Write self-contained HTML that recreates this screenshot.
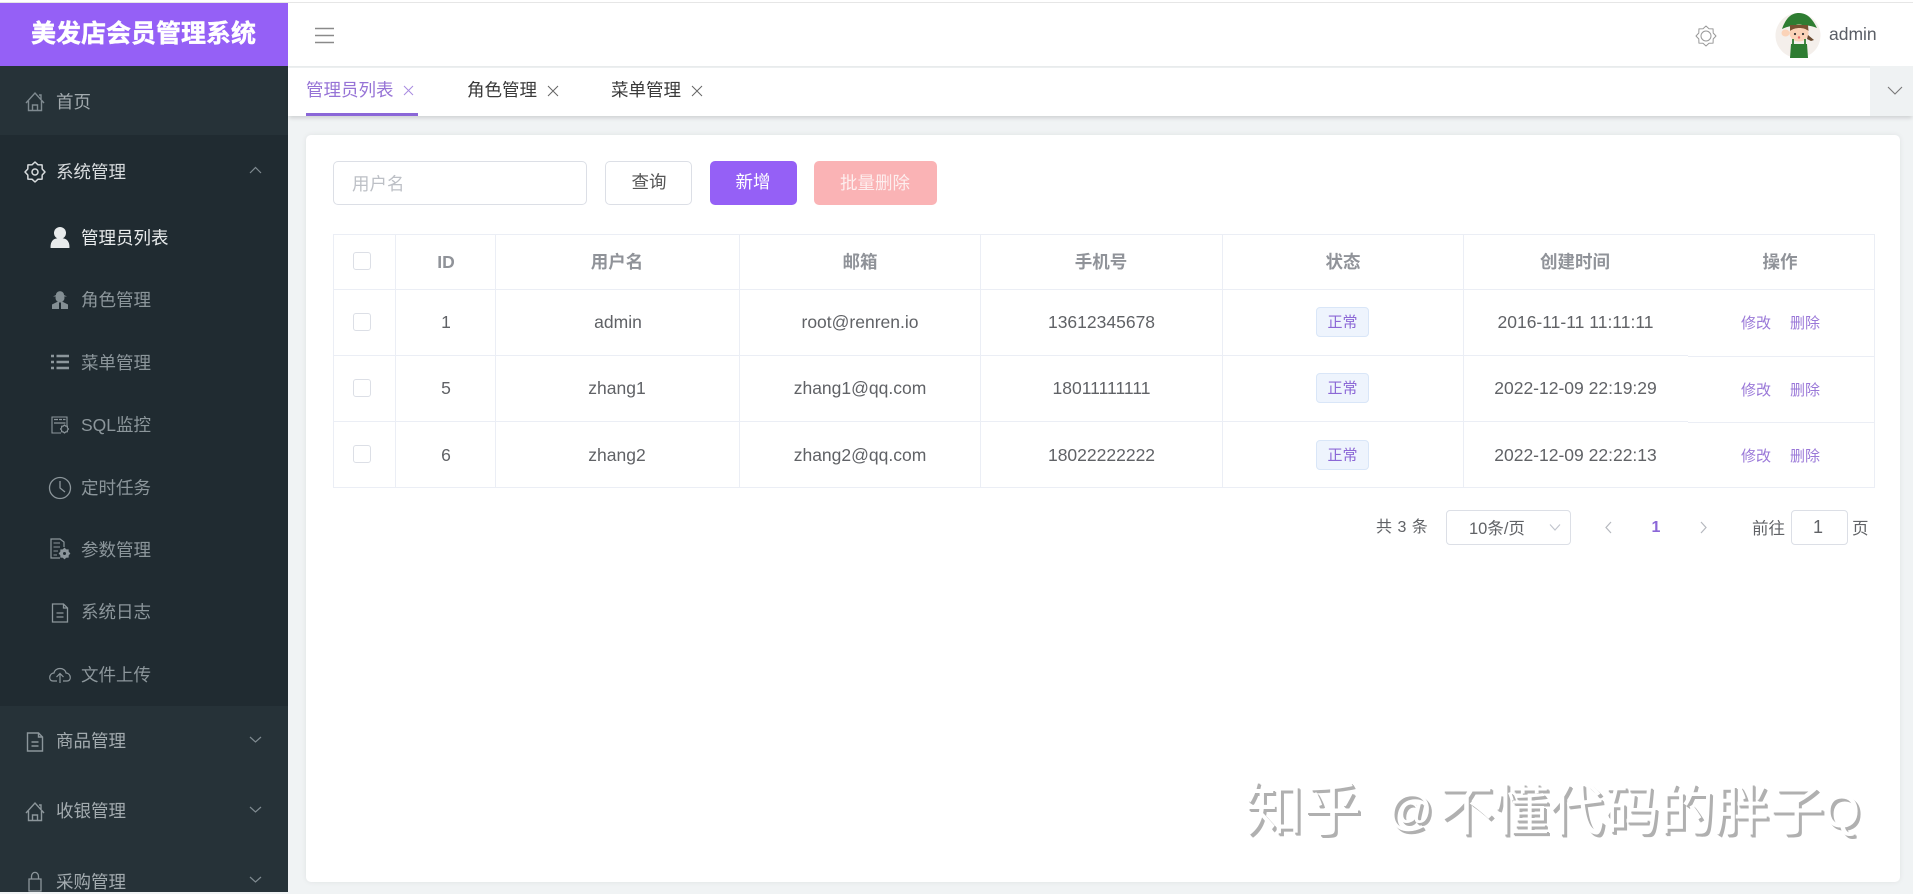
<!DOCTYPE html>
<html lang="zh-CN">
<head>
<meta charset="utf-8">
<title>美发店会员管理系统</title>
<style>
html,body{margin:0;padding:0;width:1913px;height:892px;overflow:hidden;background:#f0f3f4;font-family:"Liberation Sans","Noto Sans CJK SC",sans-serif;font-size:17.5px;color:#606266}
.b{position:absolute;box-sizing:border-box}
.t{position:absolute;white-space:nowrap;line-height:24px;height:24px}
.c{transform:translateX(-50%)}
.top{color:#a3abaf}
.sub{color:#8c969b}
.h{font-weight:bold;color:#909399}
.tag{position:absolute;box-sizing:border-box;left:1316px;width:53px;height:30px;line-height:29px;text-align:center;background:#eef4fd;border:1px solid #d9e6f8;border-radius:4px;color:#8c68d6;font-size:15px}
.l{color:#9a78d8;font-size:15px}
.ln{position:absolute;background:#ebeef5}
.cb{position:absolute;box-sizing:border-box;left:353px;width:18px;height:18px;border:1px solid #dcdfe6;border-radius:3px;background:#fff}
.w{height:60px;line-height:60px;color:#fff;text-shadow:2px 2px 0 #b0b0b0,3px 3px 0 #b0b0b0}
svg{position:absolute;left:0;top:0}
</style>
</head>
<body>
<!-- top strip and header -->
<div class="b" style="left:0;top:0;width:1913px;height:3px;background:#fff;border-bottom:1px solid #e6e6e6"></div>
<div class="b" style="left:288px;top:3px;width:1625px;height:63px;background:#fff;box-shadow:0 1px 2px rgba(0,0,0,.05)"></div>
<div class="b" style="left:0;top:3px;width:288px;height:63px;background:#9560f6"></div>
<div class="t" style="left:31px;top:22px;color:#fff;font-weight:bold;font-size:25px;-webkit-text-stroke:.4px #fff">美发店会员管理系统</div>

<!-- sidebar -->
<div class="b" style="left:0;top:66px;width:288px;height:826px;background:#263238"></div>
<div class="b" style="left:0;top:135px;width:288px;height:571px;background:#202b31"></div>
<div class="t top" style="left:56px;top:90px">首页</div>
<div class="t" style="left:56px;top:160px;color:#d8dcde">系统管理</div>
<div class="t" style="left:81px;top:226px;color:#e8ebec">管理员列表</div>
<div class="t sub" style="left:81px;top:288px">角色管理</div>
<div class="t sub" style="left:81px;top:351px">菜单管理</div>
<div class="t sub" style="left:81px;top:413px">SQL监控</div>
<div class="t sub" style="left:81px;top:476px">定时任务</div>
<div class="t sub" style="left:81px;top:538px">参数管理</div>
<div class="t sub" style="left:81px;top:600px">系统日志</div>
<div class="t sub" style="left:81px;top:663px">文件上传</div>
<div class="t top" style="left:56px;top:729px">商品管理</div>
<div class="t top" style="left:56px;top:799px">收银管理</div>
<div class="t top" style="left:56px;top:870px">采购管理</div>

<!-- tabs -->
<div class="b" style="left:288px;top:68px;width:1625px;height:48px;background:#fff;box-shadow:0 3px 4px -1px rgba(0,0,0,.14)"></div>
<div class="b" style="left:1870px;top:66px;width:43px;height:50px;background:#eff2f3"></div>
<div class="t" style="left:306px;top:78px;color:#9673d6">管理员列表</div>
<div class="t" style="left:467px;top:78px;color:#3a3a3a">角色管理</div>
<div class="t" style="left:611px;top:78px;color:#3a3a3a">菜单管理</div>
<div class="b" style="left:306px;top:113px;width:112px;height:3px;background:#8b67d8"></div>

<!-- card -->
<div class="b" style="left:306px;top:135px;width:1594px;height:747px;background:#fff;border-radius:5px;box-shadow:0 0 6px rgba(0,0,0,.07)"></div>

<!-- toolbar -->
<div class="b" style="left:333px;top:161px;width:254px;height:44px;border:1px solid #dcdfe6;border-radius:5px;background:#fff"></div>
<div class="t" style="left:352px;top:172px;color:#bdc0c6">用户名</div>
<div class="b" style="left:605px;top:161px;width:87px;height:44px;border:1px solid #dcdfe6;border-radius:5px;background:#fff"></div>
<div class="t c" style="left:649px;top:170px;color:#555">查询</div>
<div class="b" style="left:710px;top:161px;width:87px;height:44px;border-radius:5px;background:#9560f6"></div>
<div class="t c" style="left:753px;top:170px;color:#fff">新增</div>
<div class="b" style="left:814px;top:161px;width:123px;height:44px;border-radius:5px;background:#fab3b5"></div>
<div class="t c" style="left:875px;top:171px;color:#fdeeee">批量删除</div>

<!-- table lines -->
<div class="ln" style="left:333px;top:234px;width:1542px;height:1px"></div>
<div class="ln" style="left:333px;top:289px;width:1542px;height:1px"></div>
<div class="ln" style="left:333px;top:355px;width:1355px;height:1px"></div>
<div class="ln" style="left:1688px;top:356px;width:187px;height:1px"></div>
<div class="ln" style="left:333px;top:421px;width:1355px;height:1px"></div>
<div class="ln" style="left:1688px;top:422px;width:187px;height:1px"></div>
<div class="ln" style="left:333px;top:487px;width:1542px;height:1px"></div>
<div class="ln" style="left:333px;top:234px;width:1px;height:254px"></div>
<div class="ln" style="left:395px;top:234px;width:1px;height:254px"></div>
<div class="ln" style="left:495px;top:234px;width:1px;height:254px"></div>
<div class="ln" style="left:739px;top:234px;width:1px;height:254px"></div>
<div class="ln" style="left:980px;top:234px;width:1px;height:254px"></div>
<div class="ln" style="left:1222px;top:234px;width:1px;height:254px"></div>
<div class="ln" style="left:1463px;top:234px;width:1px;height:254px"></div>
<div class="ln" style="left:1874px;top:234px;width:1px;height:254px"></div>

<!-- table header -->
<div class="cb" style="top:252px"></div>
<div class="t c h" style="left:446px;top:250px">ID</div>
<div class="t c h" style="left:617px;top:250px">用户名</div>
<div class="t c h" style="left:860px;top:250px">邮箱</div>
<div class="t c h" style="left:1101px;top:250px">手机号</div>
<div class="t c h" style="left:1343px;top:250px">状态</div>
<div class="t c h" style="left:1575px;top:250px">创建时间</div>
<div class="t c h" style="left:1780px;top:250px">操作</div>

<!-- row 1 -->
<div class="cb" style="top:313px"></div>
<div class="t c" style="left:446px;top:310px">1</div>
<div class="t c" style="left:618px;top:310px">admin</div>
<div class="t c" style="left:860px;top:310px">root@renren.io</div>
<div class="t c" style="left:1101.500px;top:310px">13612345678</div>
<div class="tag" style="top:307px">正常</div>
<div class="t c" style="left:1575.500px;top:310px">2016-11-11 11:11:11</div>
<div class="t l" style="left:1741px;top:312px">修改</div>
<div class="t l" style="left:1790px;top:312px">删除</div>

<!-- row 2 -->
<div class="cb" style="top:379px"></div>
<div class="t c" style="left:446px;top:376px">5</div>
<div class="t c" style="left:617px;top:376px">zhang1</div>
<div class="t c" style="left:860px;top:376px">zhang1@qq.com</div>
<div class="t c" style="left:1101.500px;top:375.500px">18011111111</div>
<div class="tag" style="top:373px">正常</div>
<div class="t c" style="left:1575.500px;top:375.500px">2022-12-09 22:19:29</div>
<div class="t l" style="left:1741px;top:378.500px">修改</div>
<div class="t l" style="left:1790px;top:378.500px">删除</div>

<!-- row 3 -->
<div class="cb" style="top:445px"></div>
<div class="t c" style="left:446px;top:442.500px">6</div>
<div class="t c" style="left:617px;top:442.500px">zhang2</div>
<div class="t c" style="left:860px;top:442.500px">zhang2@qq.com</div>
<div class="t c" style="left:1101.500px;top:442.500px">18022222222</div>
<div class="tag" style="top:440px">正常</div>
<div class="t c" style="left:1575.500px;top:442.500px">2022-12-09 22:22:13</div>
<div class="t l" style="left:1741px;top:444.500px">修改</div>
<div class="t l" style="left:1790px;top:444.500px">删除</div>

<!-- pagination -->
<div class="t" style="left:1376px;top:516px;font-size:16px;word-spacing:1px">共 3 条</div>
<div class="b" style="left:1446px;top:510px;width:125px;height:35px;border:1px solid #dcdfe6;border-radius:4px;background:#fff"></div>
<div class="t" style="left:1469px;top:517px;font-size:16.5px">10条/页</div>
<div class="t c" style="left:1656px;top:516px;font-size:16px;font-weight:bold;color:#8b67d8">1</div>
<div class="t" style="left:1752px;top:517px;font-size:16.5px">前往</div>
<div class="b" style="left:1791px;top:510px;width:57px;height:35px;border:1px solid #dcdfe6;border-radius:4px;background:#fff"></div>
<div class="t c" style="left:1818px;top:515px;font-size:18px">1</div>
<div class="t" style="left:1852px;top:517px;font-size:16.5px">页</div>

<!-- header right -->
<div class="t" style="left:1829px;top:22px;color:#5a5e66;font-size:17.5px">admin</div>

<!-- watermark -->
<div class="t w" style="left:1245px;top:781px;font-size:58px">知乎</div>
<div class="t w" style="left:1388px;top:781px;font-size:44px">@</div>
<div class="t w" style="left:1439px;top:781px;font-size:55px">不懂代码的胖子</div>
<div class="t w" style="left:1824px;top:781px;font-size:46px">Q</div>

<!-- icons -->
<svg width="1913" height="892" viewBox="0 0 1913 892" fill="none">
<defs>
<g id="gear"><polygon points="10,0 7.2,3 7.07,7.07 3,7.2 0,10 -3,7.2 -7.07,7.07 -7.2,3 -10,0 -7.2,-3 -7.07,-7.07 -3,-7.2 0,-10 3,-7.2 7.07,-7.07 7.2,-3" stroke-linejoin="round"/></g>
<g id="home"><path d="M-9 1 L0 -9 L9 1 M-6.5 -1 V8.5 H6.5 V-1 M-2.5 8.5 V3 H2.5 V8.5 M4 -7 H6 V-3"/></g>
<g id="doc"><path d="M-7.5 -9 H3.5 L7.5 -5 V9 H-7.5 Z M3.5 -9 V-5 H7.5 M-3.5 0 H3.5 M-3.5 4 H3.5"/></g>
</defs>

<!-- hamburger -->
<path d="M315 28.500H334M315 35.500H334M315 42.500H334" stroke="#8a8a8a" stroke-width="1.600"/>

<!-- sidebar icons top-level -->
<use href="#home" x="35" y="102" stroke="#7f8a90" stroke-width="1.400"/>
<use href="#gear" x="35" y="172" stroke="#d8dcde" stroke-width="1.500"/>
<circle cx="35" cy="172" r="3" stroke="#d8dcde" stroke-width="1.500"/>
<path d="M250 173L255.500 167.500L261 173" stroke="#7f8a90" stroke-width="1.200"/>
<use href="#doc" x="35" y="742" stroke="#8c969b" stroke-width="1.400"/>
<use href="#home" x="35" y="812" stroke="#8c969b" stroke-width="1.400"/>
<path d="M29 879H41V891H29Z M31.500 879V876.500C31.500 871 38.500 871 38.500 876.500V879" stroke="#8c969b" stroke-width="1.300"/>
<path d="M250 737L255.500 742L261 737M250 807L255.500 812L261 807M250 877L255.500 882L261 877" stroke="#7f8a90" stroke-width="1.200"/>

<!-- sidebar icons sub -->
<circle cx="60" cy="233" r="6" fill="#e8ebec"/>
<path d="M51 247.500C51 240 55 238.500 60 238.500C65 238.500 69 240 69 247.500Z" fill="#e8ebec" stroke="#e8ebec" stroke-linejoin="round"/>
<path d="M56 295C56 290 64 290 64 295L67 296.500H53Z" fill="#838e93"/>
<circle cx="60" cy="298" r="4.500" fill="#838e93"/>
<path d="M52 309V304.500L57 302H63L68 304.500V309Z" fill="#838e93"/>
<path d="M59 302.500V309H61V302.500Z" fill="#202b31"/>
<path d="M51 356H54M51 362H54M51 368H54" stroke="#8c969b" stroke-width="2.400"/>
<path d="M56.500 356H69M56.500 362H69M56.500 368H69" stroke="#8c969b" stroke-width="2.400"/>
<path d="M67 426V417H52V433H61" stroke="#8c969b" stroke-width="1.100"/>
<path d="M54 419.500H58M59 419.500H62M63 419.500H65.500M54 423H65.500" stroke="#8c969b" stroke-width="1.200"/>
<use href="#gear" transform="translate(64.500 429) scale(.4)" stroke="#8c969b" stroke-width="3"/>
<circle cx="60" cy="488" r="10.500" stroke="#8c969b" stroke-width="1.300"/>
<path d="M60 481V488L65 492" stroke="#8c969b" stroke-width="1.300"/>
<path d="M64 547V542L60 539H51V558H60" stroke="#8c969b" stroke-width="1.200"/>
<path d="M53.500 543H60M53.500 547H60M53.500 551H58M53.500 555H57" stroke="#8c969b"/>
<use href="#gear" transform="translate(64.500 553.500) scale(.55)" fill="#8c969b" stroke="#8c969b"/>
<circle cx="64.500" cy="553.500" r="1.500" fill="#202b31"/>
<use href="#doc" x="60" y="613" stroke="#8c969b" stroke-width="1.300"/>
<path d="M57 681H53C48 681 49 673 54 673C55 667 65 667 66 673C71 673 72 681 67 681H63" stroke="#8c969b" stroke-width="1.200"/>
<path d="M60 683V674M56.500 677L60 673.500L63.500 677" stroke="#8c969b" stroke-width="1.200"/>

<!-- tab close -->
<path d="M404 86L413 95M413 86L404 95" stroke="#a88be0"/>
<path d="M548 86L558 96M558 86L548 96" stroke="#666"/>
<path d="M692 86L702 96M702 86L692 96" stroke="#666"/>
<path d="M1888 87L1895 94L1902 87" stroke="#777" stroke-width="1.100"/>

<!-- settings -->
<use href="#gear" x="1706" y="36" stroke="#999" stroke-width="1"/>
<circle cx="1706" cy="36" r="5" stroke="#999"/>

<!-- avatar -->
<circle cx="1798" cy="35.500" r="22.500" fill="#f4efeb"/>
<path d="M1782 29C1786 18 1791 13 1799 13C1808 13 1813 20 1817 28C1808 24 1792 24 1782 29Z" fill="#2e7d32"/>
<ellipse cx="1799" cy="33" rx="9.500" ry="8.500" fill="#fbd3b8"/>
<path d="M1790 31C1795 27 1804 27 1808.500 31L1808 25H1790Z" fill="#7a5233"/>
<ellipse cx="1785.500" cy="33" rx="4" ry="3.500" fill="#fbd3b8"/>
<circle cx="1795" cy="34" r="1.100" fill="#333"/><circle cx="1803" cy="34" r="1.100" fill="#333"/>
<circle cx="1799" cy="37.500" r="1.200" fill="#e86a6a"/>
<path d="M1791 44H1807L1808 58H1790Z" fill="#2e7d32"/>
<path d="M1793 44V39M1805 44V39" stroke="#2e7d32" stroke-width="1.800"/>
<path d="M1808 35L1814 40L1811 41L1807 39Z" fill="#6b4a2f"/>

<!-- pagination icons -->
<path d="M1550 524.500L1555 530L1560 524.500" stroke="#c0c4cc" stroke-width="1.100"/>
<path d="M1611 522L1606 527.500L1611 533" stroke="#b5b8be" stroke-width="1.200"/>
<path d="M1701 522L1706 527.500L1701 533" stroke="#b5b8be" stroke-width="1.200"/>
</svg>
</body>
</html>
